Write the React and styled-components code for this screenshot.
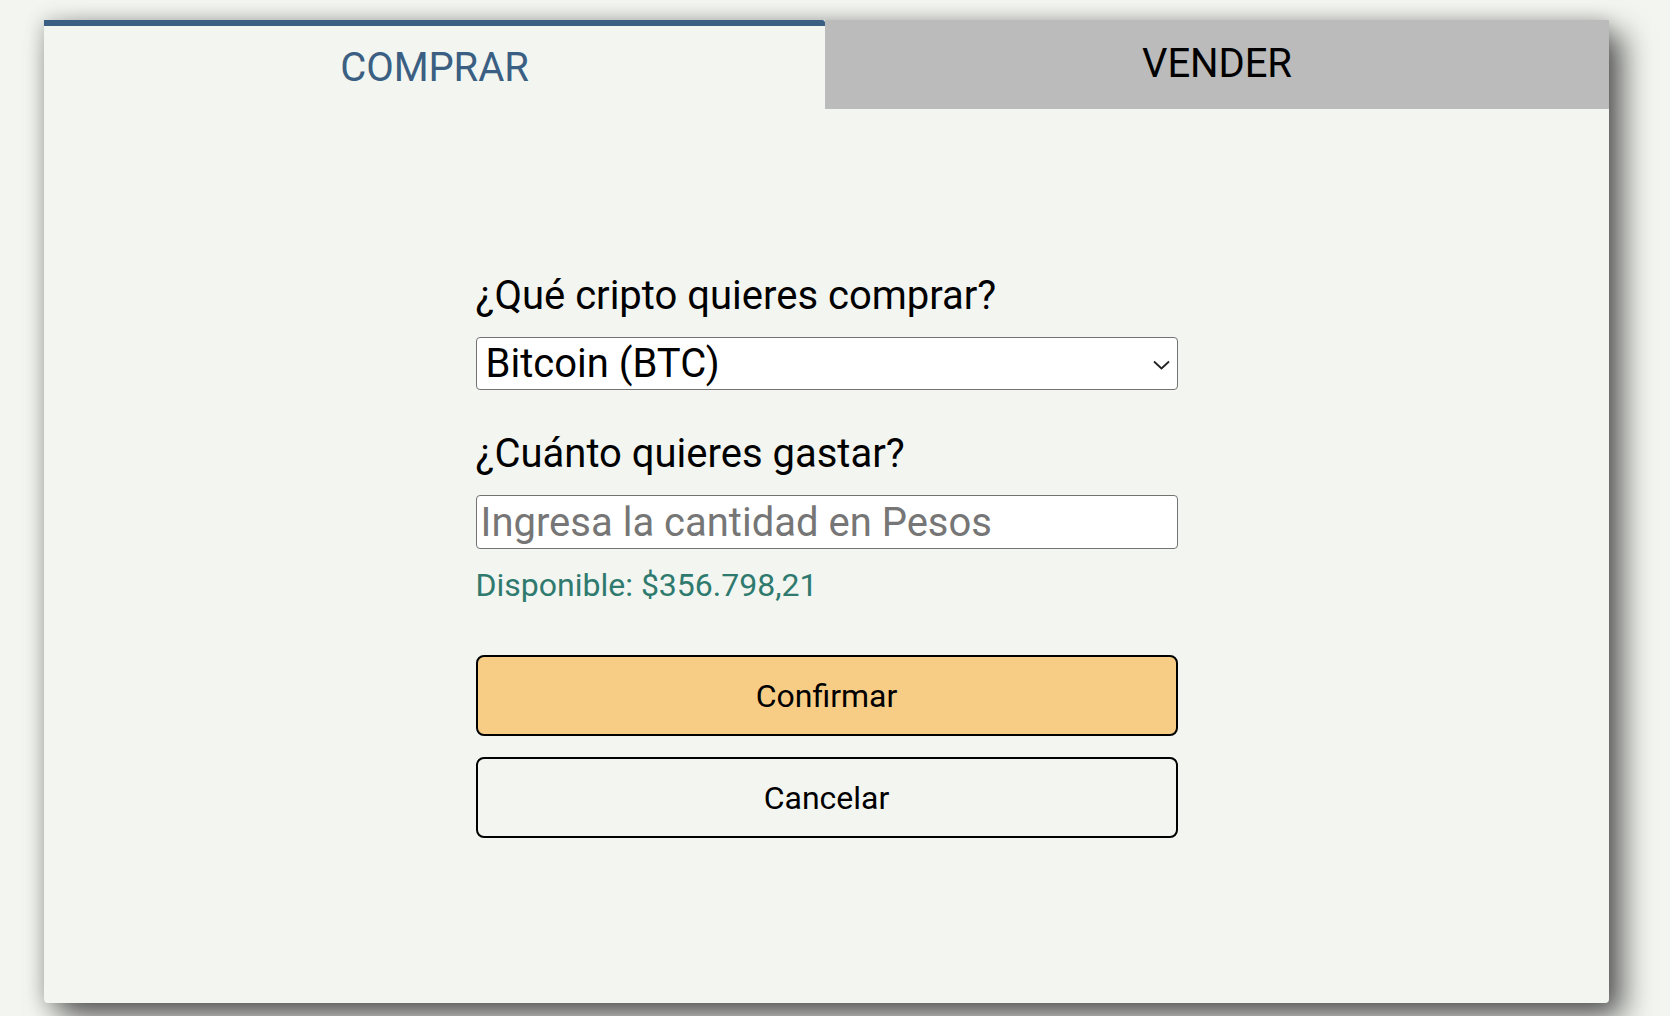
import React from "react";
import styled, { createGlobalStyle } from "styled-components";

const Global = createGlobalStyle`
  html, body { margin: 0; padding: 0; background: #f3f5f0; }
  body { font-family: Roboto, "Liberation Sans", sans-serif; }
  * { box-sizing: border-box; }
`;

const Page = styled.div`
  padding: 20px 0 14px 44px;
`;

const Card = styled.div`
  width: 1565px;
  height: 983px;
  background: #f3f5f0;
  border-radius: 0 0 4px 4px;
  box-shadow: -2px 0 18px rgba(0, 0, 0, 0.18), 14px 14px 30px rgba(0, 0, 0, 0.62);
  display: flex;
  flex-direction: column;
`;

const Tabs = styled.div`
  display: grid;
  grid-template-columns: 781px 1fr;
  height: 89px;
`;

const Tab = styled.div`
  display: flex;
  align-items: center;
  justify-content: center;
  font-size: 40px;
  letter-spacing: -0.1px;
  background: ${(p) => (p.$active ? "transparent" : "#bbbbbb")};
  color: ${(p) => (p.$active ? "#3a5f83" : "#000")};
  border-top: ${(p) => (p.$active ? "6px solid #3a5f83" : "none")};
  border-top-right-radius: ${(p) => (p.$active ? "3px" : "0")};
  padding-bottom: ${(p) => (p.$active ? "0" : "2px")};
`;

const Body = styled.div`
  flex: 1;
  display: flex;
  justify-content: center;
  align-items: flex-start;
  padding-top: 163px;
`;

const Form = styled.div`
  width: 702px;
  display: flex;
  flex-direction: column;
`;

const Label = styled.label`
  font-size: 40px;
  color: #000;
  line-height: 47px;
  margin-bottom: ${(p) => p.$mb}px;
`;

const SelectWrap = styled.div`
  position: relative;
  margin-bottom: 40px;
`;

const Select = styled.select`
  appearance: none;
  -webkit-appearance: none;
  width: 100%;
  height: 53px;
  border: 1.5px solid #737373;
  border-radius: 4px;
  background: #fff;
  font-family: Roboto, "Liberation Sans", sans-serif;
  font-size: 40px;
  color: #000;
  padding: 0 40px 0 9px;
  outline: none;
`;

const Chevron = styled.svg`
  position: absolute;
  right: 8px;
  top: 23px;
  pointer-events: none;
`;

const Input = styled.input`
  width: 100%;
  height: 54px;
  border: 1.5px solid #737373;
  border-radius: 4px;
  background: #fff;
  font-family: Roboto, "Liberation Sans", sans-serif;
  font-size: 40px;
  color: #000;
  padding: 0 4px;
  outline: none;
  margin-bottom: 17px;
  &::placeholder { color: #767676; }
`;

const Available = styled.div`
  font-size: 32px;
  line-height: 38px;
  color: #2f7a6e;
  margin-bottom: 51px;
`;

const Button = styled.button`
  width: 100%;
  height: 81px;
  border: 2px solid #000;
  border-radius: 8px;
  background: ${(p) => (p.$primary ? "#f7cd85" : "transparent")};
  font-family: Roboto, "Liberation Sans", sans-serif;
  font-size: 32px;
  color: #000;
  cursor: pointer;
  margin-bottom: ${(p) => (p.$primary ? "21px" : "0")};
`;

export default function App() {
  return (
    <>
      <Global />
      <Page>
        <Card>
          <Tabs>
            <Tab $active>COMPRAR</Tab>
            <Tab>VENDER</Tab>
          </Tabs>
          <Body>
            <Form>
              <Label $mb={18}>¿Qué cripto quieres comprar?</Label>
              <SelectWrap>
                <Select defaultValue="btc">
                  <option value="btc">Bitcoin (BTC)</option>
                  <option value="eth">Ethereum (ETH)</option>
                </Select>
                <Chevron width="17" height="10" viewBox="0 0 17 10">
                  <path d="M1 1.5 L8.5 8.5 L16 1.5" fill="none" stroke="#222" strokeWidth="1.8" />
                </Chevron>
              </SelectWrap>
              <Label $mb={18}>¿Cuánto quieres gastar?</Label>
              <Input placeholder="Ingresa la cantidad en Pesos" />
              <Available>Disponible: $356.798,21</Available>
              <Button $primary>Confirmar</Button>
              <Button>Cancelar</Button>
            </Form>
          </Body>
        </Card>
      </Page>
    </>
  );
}
